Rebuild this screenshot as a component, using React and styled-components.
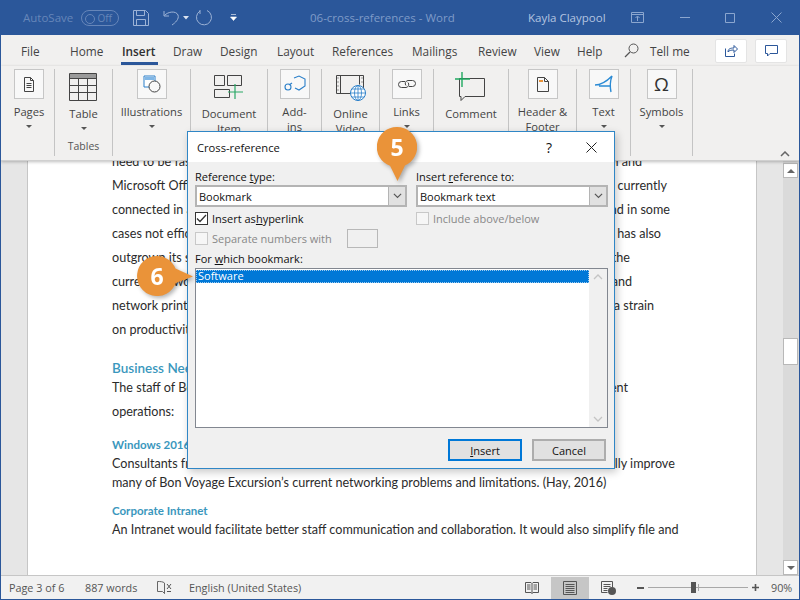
import React from 'react';
import styled, { createGlobalStyle } from 'styled-components';

const Global = createGlobalStyle`
  html, body { margin: 0; padding: 0; background: #fff; }
  * { box-sizing: border-box; }
`;

const uiFont = `"Open Sans", "Noto Sans", sans-serif`;
const docFont = `Lato, "Open Sans", sans-serif`;

const Frame = styled.div`
  position: relative;
  width: 800px;
  height: 600px;
  overflow: hidden;
  display: flex;
  flex-direction: column;
  border: 1px solid #2b579a;
  border-top: 0;
  font-family: ${uiFont};
  background: #f1f0ef;
`;

/* title bar */
const TitleBar = styled.div`
  position: relative;
  flex: 0 0 35px;
  display: flex;
  align-items: center;
  background: #2b579a;
  color: #7f9bc8;
  font-size: 11.5px;
  padding-left: 23px;
  margin: 0 -1px;
`;
const AutoSave = styled.span`
  width: 58px;
  color: #6686b9;
`;
const Toggle = styled.span`
  width: 38px;
  height: 16px;
  border: 1px solid #6686b9;
  border-radius: 8px;
  display: flex;
  align-items: center;
  justify-content: flex-end;
  padding-right: 6px;
  font-size: 10px;
  color: #6686b9;
  position: relative;
  &::before {
    content: '';
    position: absolute;
    left: 3px;
    top: 3px;
    width: 8px;
    height: 8px;
    border-radius: 50%;
    border: 1px solid #6686b9;
  }
`;
const QuickIcons = styled.div`
  display: flex;
  align-items: center;
  margin-left: 14px;
`;
const QuickIcon = styled.svg`
  display: block;
  margin-right: ${p => p.$gap || 0}px;
`;
const DocTitle = styled.span`
  position: absolute;
  left: 310px;
  color: #7f9bc8;
`;
const UserName = styled.span`
  position: absolute;
  left: 528px;
  color: #b4c5e0;
`;
const WindowButtons = styled.div`
  margin-left: auto;
  display: flex;
  align-items: center;
  padding-right: 18px;
`;
const WinIcon = styled.svg`
  display: block;
  margin-left: ${p => p.$gap || 0}px;
`;

/* tabs */
const TabRow = styled.div`
  flex: 0 0 31px;
  display: flex;
  align-items: center;
  padding-left: 20px;
  font-size: 11.8px;
  color: #444;
`;
const Tab = styled.span`
  position: relative;
  width: ${p => p.$w}px;
  font-weight: ${p => (p.$active ? 600 : 400)};
  color: ${p => (p.$active ? '#2f2f2f' : '#444')};
  padding-top: 0;
  &::after {
    content: '';
    display: ${p => (p.$active ? 'block' : 'none')};
    position: absolute;
    left: -1px;
    bottom: -6px;
    width: 37px;
    height: 3px;
    background: #2b579a;
  }
`;
const TellMe = styled.span`
  margin-left: 11px;
  width: 65px;
`;
const HeadButton = styled.span`
  width: 32px;
  height: 24px;
  margin-right: 8px;
  display: flex;
  align-items: center;
  justify-content: center;
  background: #fff;
  border: 1px solid #e4e4e4;
  border-radius: 2px;
`;

/* ribbon */
const Ribbon = styled.div`
  position: relative;
  flex: 0 0 95px;
  display: flex;
  padding: 3px 0 4px 3px;
  box-shadow: 0 1px 3px rgba(0, 0, 0, 0.25);
  border-bottom: 1px solid #d0d0d0;
  z-index: 1;
`;
const Group = styled.div`
  width: ${p => p.$w}px;
  border-right: 1px solid #c4c4c4;
  display: flex;
  flex-direction: column;
  align-items: center;
  font-size: 11.2px;
  line-height: 15px;
  color: #444;
  text-align: center;
  overflow: hidden;
`;
const BoxIcon = styled.div`
  width: 30px;
  height: 30px;
  flex: none;
  display: flex;
  align-items: center;
  justify-content: center;
  background: #f8f8f8;
  border: 1px solid #c6c6c6;
  margin-bottom: 5px;
`;
const LargeIcon = styled.div`
  height: 30px;
  flex: none;
  display: flex;
  align-items: center;
  justify-content: center;
  margin: 3px 0 4px;
`;
const Caret = styled.span`
  display: ${p => (p.$inline ? 'inline-block' : 'block')};
  width: 0;
  height: 0;
  margin: ${p => (p.$inline ? '0 0 2px 3px' : '6px auto 0')};
  vertical-align: middle;
  border-left: 3px solid transparent;
  border-right: 3px solid transparent;
  border-top: 3px solid #555;
`;
const GroupName = styled.span`
  margin-top: auto;
  padding-bottom: 2px;
  font-size: 10.5px;
  color: #555;
`;
const Collapse = styled.svg`
  position: absolute;
  right: 9px;
  bottom: 3px;
`;

/* document */
const DocArea = styled.div`
  flex: 1;
  min-height: 0;
  display: flex;
  background: #e6e6e6;
`;
const PageWrap = styled.div`
  flex: 1;
  padding: 0 26px 0 26px;
`;
const Page = styled.div`
  height: 100%;
  background: #fff;
  border-left: 1px solid #c6c6c6;
  border-right: 1px solid #c6c6c6;
  padding-left: 84px;
  font-family: ${docFont};
  font-size: 12.6px;
  color: #2b2b2b;
  overflow: hidden;
`;
const Line = styled.div`
  display: flex;
  justify-content: space-between;
  width: ${p => p.$w}px;
  height: ${p => p.$h || 24}px;
  line-height: ${p => p.$h || 24}px;
  margin-top: ${p => p.$top || 0}px;
  white-space: nowrap;
`;
const Heading = styled.div`
  font-size: ${p => (p.$big ? 13.5 : 11.5)}px;
  font-weight: ${p => (p.$big ? 600 : 700)};
  line-height: 16px;
  margin-top: ${p => p.$top}px;
  color: #3a97bd;
  white-space: nowrap;
`;
const ScrollBar = styled.div`
  width: 16px;
  background: #dadada;
  display: flex;
  flex-direction: column;
  padding-top: 2px;
`;
const ScrollButton = styled.div`
  width: 15px;
  height: 15px;
  background: #fff;
  border: 1px solid #b8b8b8;
  display: flex;
  align-items: center;
  justify-content: center;
  margin-top: ${p => p.$auto ? 'auto' : '0'};
`;
const ScrollThumb = styled.div`
  width: 15px;
  height: 27px;
  margin-top: 160px;
  background: #fff;
  border: 1px solid #b8b8b8;
`;

/* status bar */
const StatusBar = styled.div`
  flex: 0 0 24px;
  display: flex;
  align-items: center;
  background: #f1f1f1;
  border-top: 1px solid #c6c6c6;
  font-size: 10.8px;
  color: #555;
  padding-left: 8px;
`;
const StatusText = styled.span`
  width: ${p => p.$w}px;
  white-space: nowrap;
`;
const ViewButton = styled.span`
  height: 22px;
  width: ${p => p.$w}px;
  display: flex;
  align-items: center;
  justify-content: center;
  background: ${p => (p.$on ? '#c6c6c6' : 'transparent')};
`;
const Zoom = styled.div`
  margin-left: 10px;
  display: flex;
  align-items: center;
`;
const ZoomTrack = styled.div`
  position: relative;
  width: 100px;
  height: 1px;
  margin: 0 4px;
  background: #a8a8a8;
`;
const ZoomThumb = styled.span`
  position: absolute;
  left: 43px;
  top: -5px;
  width: 5px;
  height: 11px;
  background: #555;
`;
const ZoomTick = styled.span`
  position: absolute;
  left: 50px;
  top: -3px;
  width: 1px;
  height: 7px;
  background: #a8a8a8;
`;
const ZoomPct = styled.span`
  margin-left: 12px;
`;

/* dialog */
const Dialog = styled.div`
  position: absolute;
  left: 186px;
  top: 131px;
  width: 428px;
  height: 338px;
  z-index: 5;
  display: flex;
  flex-direction: column;
  background: #f0f0f0;
  border: 1px solid #2f86c6;
  box-shadow: 2px 3px 8px rgba(0, 0, 0, 0.22);
  font-size: 11px;
  color: #111;
`;
const DialogHead = styled.div`
  flex: 0 0 30px;
  display: flex;
  align-items: center;
  padding: 0 17px 0 9px;
  background: #fff;
  font-size: 11.2px;
`;
const DialogTitle = styled.span`
  flex: 1;
`;
const HelpMark = styled.span`
  font-size: 14px;
  margin-right: 34px;
`;
const DialogBody = styled.div`
  flex: 1;
  display: flex;
  flex-direction: column;
  padding: 7px 7px 0 7px;
`;
const Columns = styled.div`
  display: grid;
  grid-template-columns: 212px 192px;
  column-gap: 9px;
`;
const FieldLabel = styled.div`
  height: 16px;
  line-height: 15px;
  white-space: nowrap;
  color: ${p => (p.$off ? '#888' : '#111')};
`;
const Combo = styled.div`
  height: 22px;
  display: flex;
  align-items: center;
  background: #fff;
  border: 2px solid #b4b4b4;
  padding-left: 2px;
`;
const ComboValue = styled.span`
  flex: 1;
`;
const ComboArrow = styled.span`
  width: 17px;
  align-self: stretch;
  display: flex;
  align-items: center;
  justify-content: center;
  background: #e1e1e1;
  border-left: 1px solid #b4b4b4;
`;
const CheckRow = styled.div`
  display: flex;
  align-items: center;
  height: 14px;
  margin-top: ${p => p.$top || 0}px;
  color: ${p => (p.$off ? '#888' : '#111')};
  white-space: nowrap;
`;
const CheckBox = styled.span`
  flex: none;
  width: 13px;
  height: 13px;
  margin-right: 4px;
  display: flex;
  align-items: center;
  justify-content: center;
  background: ${p => (p.$off ? '#f6f6f6' : '#fff')};
  border: 1px solid ${p => (p.$off ? '#c8c8c8' : '#333')};
`;
const SmallInput = styled.span`
  width: 31px;
  height: 19px;
  margin-left: 15px;
  background: #f0f0f0;
  border: 1px solid #b8b8b8;
`;
const SeparateRow = styled.div`
  display: flex;
  align-items: center;
  height: 19px;
  margin-top: 4px;
`;
const ListBox = styled.div`
  margin-top: 1px;
  width: 413px;
  height: 160px;
  display: flex;
  background: #fff;
  border: 1px solid #828790;
`;
const ListItems = styled.div`
  flex: 1;
  padding: 1px 0 0 0;
`;
const ListItem = styled.div`
  height: 13px;
  line-height: 12px;
  padding-left: 2px;
  color: #fff;
  background: #0078d7;
  outline: 1px dotted #9ccbf0;
  outline-offset: -1px;
`;
const ListScroll = styled.div`
  width: 18px;
  background: #f0f0f0;
  display: flex;
  flex-direction: column;
  justify-content: space-between;
  align-items: center;
  padding: 5px 0 5px;
`;
const DialogButtons = styled.div`
  display: flex;
  justify-content: flex-end;
  gap: 10px;
  margin-top: 11px;
  padding-right: 1px;
`;
const DialogButton = styled.div`
  width: 74px;
  height: 22px;
  display: flex;
  align-items: center;
  justify-content: center;
  background: #e1e1e1;
  border: 2px solid ${p => (p.$primary ? '#0078d7' : '#adadad')};
`;

/* numbered callouts */
const Callout = styled.div`
  position: absolute;
  left: ${p => p.$x}px;
  top: ${p => p.$y}px;
  z-index: 6;
  width: ${p => p.$w}px;
  height: ${p => p.$h}px;
  filter: drop-shadow(2px 2px 2px rgba(0, 0, 0, 0.3));
`;
const CalloutNum = styled.span`
  position: absolute;
  left: 0;
  top: 0;
  width: 40px;
  height: 40px;
  display: flex;
  align-items: center;
  justify-content: center;
  color: #fff;
  font: 700 23px ${uiFont};
`;

const Chevron = ({ up, color = '#555', size = 9 }) => (
  <svg width={size} height={size * 0.6} viewBox="0 0 10 6">
    <path d={up ? 'M1 5l4-4 4 4' : 'M1 1l4 4 4-4'} fill="none" stroke={color} strokeWidth="1.3" />
  </svg>
);

const tabs = [
  ['File', 49], ['Home', 52], ['Insert', 51, true], ['Draw', 47], ['Design', 57], ['Layout', 55],
  ['References', 80], ['Mailings', 66], ['Review', 56], ['View', 43], ['Help', 47],
];

const stroke = { fill: 'none', stroke: '#444', strokeWidth: 1 };

function Ribbons() {
  return (
    <Ribbon>
      <Group $w={51}>
        <BoxIcon>
          <svg width="14" height="17" viewBox="0 0 14 17"><path d="M2.5 1.5h6l3 3v11h-9z M8.500 1.500v3h3 M4.500 7.500h5 M4.500 9.500h5 M4.500 11.500h5" {...stroke} /></svg>
        </BoxIcon>
        Pages<Caret />
      </Group>
      <Group $w={58}>
        <LargeIcon>
          <svg width="29" height="29" viewBox="0 0 29 29">
            <rect x="1" y="1" width="27" height="4" fill="#9a9a9a" />
            <path d="M.5.500h27v27H.5z M.5 5.500h27 M.5 12.500h27 M.5 19.500h27 M9.500 5.500v22 M18.500 5.500v22" {...stroke} />
          </svg>
        </LargeIcon>
        Table<Caret />
        <GroupName>Tables</GroupName>
      </Group>
      <Group $w={78}>
        <BoxIcon>
          <svg width="18" height="18" viewBox="0 0 18 18">
            <path d="M1 1h11v11H1z" fill="#fff" stroke="#2a7fc9" />
            <path d="M2 2h9v3H2z" fill="#7fb6e6" />
            <circle cx="11.500" cy="11.500" r="5.500" fill="#f8f8f8" stroke="#444" />
          </svg>
        </BoxIcon>
        Illustrations<Caret />
      </Group>
      <Group $w={77}>
        <LargeIcon>
          <svg width="32" height="26" viewBox="0 0 32 26">
            <path d="M1.500 1.500h10v10h-10z M14.500 1.500h14v10h-14z M1.500 15.500h15v8h-15z" {...stroke} />
            <path d="M22 10v15 M15 18h15" stroke="#2aa866" strokeWidth="1.200" fill="none" />
          </svg>
        </LargeIcon>
        Document<br />Item
      </Group>
      <Group $w={54}>
        <BoxIcon>
          <svg width="24" height="18" viewBox="0 0 24 18">
            <path d="M11 3l5-2 6 3v7l-6 4-4-2" fill="none" stroke="#2a7fc9" strokeWidth="1.100" />
            <path d="M9 8l-3 2" fill="none" stroke="#2a7fc9" strokeWidth="1.100" />
            <circle cx="5" cy="12" r="3" fill="none" stroke="#2a7fc9" strokeWidth="1.100" />
          </svg>
        </BoxIcon>
        Add-<br />ins<Caret $inline />
      </Group>
      <Group $w={58}>
        <LargeIcon>
          <svg width="32" height="29" viewBox="0 0 32 29">
            <path d="M1.500 2.500h27v18h-27z M5.500 2.500v18 M24.500 2.500v9" {...stroke} />
            <path d="M3 4.500v1 M3 8.500v1 M3 12.500v1 M3 16.500v1 M27 4.500v1 M27 8.500v1" stroke="#444" fill="none" />
            <circle cx="23" cy="20" r="7.500" fill="#fff" stroke="#2a7fc9" />
            <path d="M15.500 20h15 M23 12.500v15 M17 16h12 M17 24h12" stroke="#2a7fc9" fill="none" strokeWidth=".8" />
            <ellipse cx="23" cy="20" rx="3.500" ry="7.500" fill="none" stroke="#2a7fc9" strokeWidth=".8" />
          </svg>
        </LargeIcon>
        Online<br />Video
      </Group>
      <Group $w={54}>
        <BoxIcon>
          <svg width="20" height="14" viewBox="0 0 20 14">
            <path d="M8 4.500H4.500a3 3 0 000 6H9a3 3 0 002-5 M12 9.500h3.500a3 3 0 000-6H11a3 3 0 00-2 5" {...stroke} />
          </svg>
        </BoxIcon>
        Links<Caret />
      </Group>
      <Group $w={75}>
        <LargeIcon>
          <svg width="32" height="30" viewBox="0 0 32 30">
            <path d="M4.500 6.500h25v18H10l-4 4v-4H4.500z" {...stroke} />
            <path d="M7 0v15 M0 7h15" stroke="#1fa860" strokeWidth="1.400" fill="none" />
          </svg>
        </LargeIcon>
        Comment
      </Group>
      <Group $w={68}>
        <BoxIcon>
          <svg width="14" height="17" viewBox="0 0 14 17">
            <path d="M1.500 1.500h7l4 4v10h-11z M8.500 1.500v4h4" {...stroke} />
            <path d="M3 4h4v2H3z" fill="#ea9339" />
          </svg>
        </BoxIcon>
        Header &amp;<br />Footer<Caret $inline />
      </Group>
      <Group $w={54}>
        <BoxIcon>
          <svg width="20" height="18" viewBox="0 0 20 18">
            <path d="M1 10c5 0 10-2 17-9-2 5-2 11-1 16 M5 11l11 0" fill="none" stroke="#2a8ad4" strokeWidth="1.400" />
          </svg>
        </BoxIcon>
        Text<Caret />
      </Group>
      <Group $w={62}>
        <BoxIcon>
          <span style={{ fontSize: 19, color: '#333', lineHeight: 1 }}>Ω</span>
        </BoxIcon>
        Symbols<Caret />
      </Group>
      <Collapse width="10" height="6" viewBox="0 0 10 6"><path d="M1 5l4-4 4 4" fill="none" stroke="#666" strokeWidth="1.500" /></Collapse>
    </Ribbon>
  );
}

function CrossReference() {
  return (
    <Dialog>
      <DialogHead>
        <DialogTitle>Cross-reference</DialogTitle>
        <HelpMark>?</HelpMark>
        <svg width="11" height="11" viewBox="0 0 11 11"><path d="M.5.500l10 10 M10.500.500l-10 10" stroke="#222" fill="none" /></svg>
      </DialogHead>
      <DialogBody>
        <Columns>
          <div>
            <FieldLabel>Reference <u>t</u>ype:</FieldLabel>
            <Combo>
              <ComboValue>Bookmark</ComboValue>
              <ComboArrow><Chevron /></ComboArrow>
            </Combo>
            <CheckRow $top={4}>
              <CheckBox>
                <svg width="11" height="9" viewBox="0 0 11 9"><path d="M1 4.500l3 3 6-6.500" fill="none" stroke="#333" strokeWidth="1.300" /></svg>
              </CheckBox>
              Insert as <u>h</u>yperlink
            </CheckRow>
          </div>
          <div>
            <FieldLabel>Insert <u>r</u>eference to:</FieldLabel>
            <Combo>
              <ComboValue>Bookmark text</ComboValue>
              <ComboArrow><Chevron /></ComboArrow>
            </Combo>
            <CheckRow $top={4} $off>
              <CheckBox $off />
              Include above/below
            </CheckRow>
          </div>
        </Columns>
        <SeparateRow>
          <CheckRow $off>
            <CheckBox $off />
            Separate numbers with
          </CheckRow>
          <SmallInput />
        </SeparateRow>
        <FieldLabel style={{ marginTop: 3 }}>For <u>w</u>hich bookmark:</FieldLabel>
        <ListBox>
          <ListItems><ListItem>Software</ListItem></ListItems>
          <ListScroll>
            <Chevron up color="#c4c4c4" size={10} />
            <Chevron color="#c4c4c4" size={10} />
          </ListScroll>
        </ListBox>
        <DialogButtons>
          <DialogButton $primary><span><u>I</u>nsert</span></DialogButton>
          <DialogButton>Cancel</DialogButton>
        </DialogButtons>
      </DialogBody>
    </Dialog>
  );
}

export default function App() {
  return (
    <Frame>
      <Global />
      <TitleBar>
        <AutoSave>AutoSave</AutoSave>
        <Toggle>Off</Toggle>
        <QuickIcons>
          <QuickIcon $gap={14} width="16" height="16" viewBox="0 0 16 16">
            <path d="M.5.500h12l3 3v12H.500z M3.500.500v5h8v-5 M3.500 15.500v-6h9v6" fill="none" stroke="#9db3d6" />
          </QuickIcon>
          <QuickIcon $gap={3} width="17" height="16" viewBox="0 0 17 16">
            <path d="M1 1v5h5 M1.500 5.500C5 1.500 13 .5 15 5c1.500 4-3 8-6 10" fill="none" stroke="#9db3d6" />
          </QuickIcon>
          <QuickIcon $gap={7} width="6" height="4" viewBox="0 0 6 4"><path d="M0 0h6L3 3.500z" fill="#dbe3f0" /></QuickIcon>
          <QuickIcon $gap={17} width="17" height="17" viewBox="0 0 17 17">
            <path d="M11 1.500a7.500 7.500 0 11-7 .5 M4 1v4" fill="none" stroke="#9db3d6" />
          </QuickIcon>
          <QuickIcon width="7" height="7" viewBox="0 0 7 7"><path d="M1 .5h5M.5 3h6L3.500 6.500z" fill="#fff" stroke="#fff" strokeWidth=".6" /></QuickIcon>
        </QuickIcons>
        <DocTitle>06-cross-references - Word</DocTitle>
        <UserName>Kayla Claypool</UserName>
        <WindowButtons>
          <WinIcon width="13" height="11" viewBox="0 0 13 11">
            <path d="M.5.500h12v10H.5z M.5 2.500h12 M6.500 9V4.500M4.500 6l2-2 2 2" fill="none" stroke="#8ba6cf" />
          </WinIcon>
          <WinIcon $gap={36} width="10" height="1" viewBox="0 0 10 1"><path d="M0 .5h10" stroke="#8ba6cf" /></WinIcon>
          <WinIcon $gap={35} width="10" height="10" viewBox="0 0 10 10"><path d="M.5.500h9v9h-9z" fill="none" stroke="#8ba6cf" /></WinIcon>
          <WinIcon $gap={36} width="11" height="11" viewBox="0 0 11 11"><path d="M.5.500l10 10M10.500.500l-10 10" fill="none" stroke="#8ba6cf" /></WinIcon>
        </WindowButtons>
      </TitleBar>

      <TabRow>
        {tabs.map(([name, w, active]) => <Tab key={name} $w={w} $active={active}>{name}</Tab>)}
        <svg width="15" height="15" viewBox="0 0 15 15"><circle cx="9.500" cy="5.500" r="4.500" fill="none" stroke="#555" /><path d="M6 9l-5 5" stroke="#555" strokeWidth="1.200" /></svg>
        <TellMe>Tell me</TellMe>
        <HeadButton>
          <svg width="13" height="13" viewBox="0 0 13 13"><path d="M.5 4.500v8h9v-3 M3 8c0-3 2-4 6-4V1.500l3.500 3.500L9 8.500V6C6 6 4 6.500 3 8z" fill="none" stroke="#2b579a" /></svg>
        </HeadButton>
        <HeadButton>
          <svg width="13" height="12" viewBox="0 0 13 12"><path d="M.5.500h12v8H5l-2.500 2.500V8.500h-2z" fill="none" stroke="#2b579a" /></svg>
        </HeadButton>
      </TabRow>

      <Ribbons />

      <DocArea>
        <PageWrap>
          <Page>
            <Line $w={530} style={{ marginTop: -11 }}><span>need to be faster and more reliable to run</span><span>on and</span></Line>
            <Line $w={555}><span>Microsoft Office and other applications are</span><span>currently</span></Line>
            <Line $w={558}><span>connected in a peer-to-peer arrangement</span><span>and in some</span></Line>
            <Line $w={549}><span>cases not efficient. The company</span><span>has also</span></Line>
            <Line $w={518}><span>outgrown its small office network</span><span>the</span></Line>
            <Line $w={520}><span>current network has no file server</span><span>and</span></Line>
            <Line $w={542}><span>network printing capabilities which</span><span>a strain</span></Line>
            <Line $w={300}><span>on productivity.</span></Line>
            <Heading $big $top={18}>Business Needs</Heading>
            <Line $w={516} $h={24} $top={0}><span>The staff of Bon Voyage need an</span><span>ent</span></Line>
            <Line $w={300}><span>operations:</span></Line>
            <Heading $top={13}>Windows 2016 Server</Heading>
            <Line $w={560} $h={19} $top={1}><span>Consultants from several firms advise that a dedicated Windows 2016 server will dramatically improve</span></Line>
            <Line $w={560} $h={19}><span>many of Bon Voyage Excursion’s current networking problems and limitations. (Hay, 2016)</span></Line>
            <Heading $top={11}>Corporate Intranet</Heading>
            <Line $w={560} $h={19} $top={1}><span>An Intranet would facilitate better staff communication and collaboration. It would also simplify file and</span></Line>
          </Page>
        </PageWrap>
        <ScrollBar>
          <ScrollButton><svg width="8" height="4" viewBox="0 0 8 4"><path d="M0 4l4-4 4 4z" fill="#666" /></svg></ScrollButton>
          <ScrollThumb />
          <ScrollButton $auto><svg width="8" height="4" viewBox="0 0 8 4"><path d="M0 0l4 4 4-4z" fill="#666" /></svg></ScrollButton>
        </ScrollBar>
      </DocArea>

      <StatusBar>
        <StatusText $w={76}>Page 3 of 6</StatusText>
        <StatusText $w={72}>887 words</StatusText>
        <svg width="15" height="14" viewBox="0 0 15 14" style={{ marginRight: 17 }}>
          <path d="M7.500 2C6 .5 3 .5.500.500v10h5l2 2V2z M7.500 12.500v-2" fill="none" stroke="#666" />
          <path d="M10 3l4 5m0-5l-4 5M10 10.500h4" fill="none" stroke="#555" />
        </svg>
        <StatusText $w={324}>English (United States)</StatusText>
        <ViewButton $w={38}>
          <svg width="14" height="14" viewBox="0 0 14 14"><path d="M.5 1.500h5.500L7 2.500l1-1h5.500v10H8l-1 1-1-1H.5z M7 2.500v10 M2 4h3.500 M2 6h3.500 M2 8h3.500 M8.500 4H12 M8.500 6H12 M8.500 8H12" fill="none" stroke="#555" /></svg>
        </ViewButton>
        <ViewButton $w={38} $on>
          <svg width="14" height="14" viewBox="0 0 14 14"><path d="M.5.500h13v13H.5z M2.500 3.500h9 M2.500 5.500h9 M2.500 7.500h9 M2.500 9.500h9 M2.500 11.500h9" fill="none" stroke="#555" /></svg>
        </ViewButton>
        <ViewButton $w={38}>
          <svg width="15" height="14" viewBox="0 0 15 14">
            <path d="M.5.500h11v6 M.5.500v11h6 M2.500 3.500h7 M2.500 5.500h7 M2.500 7.500h4 M2.500 9.500h4" fill="none" stroke="#555" />
            <circle cx="11" cy="10" r="4" fill="#555" />
          </svg>
        </ViewButton>
        <Zoom>
          <svg width="7" height="2" viewBox="0 0 7 2"><path d="M0 1h7" stroke="#555" strokeWidth="2" /></svg>
          <ZoomTrack><ZoomThumb /><ZoomTick /></ZoomTrack>
          <svg width="7" height="7" viewBox="0 0 7 7"><path d="M0 3.500h7M3.500 0v7" stroke="#555" strokeWidth="1.600" /></svg>
          <ZoomPct>90%</ZoomPct>
        </Zoom>
      </StatusBar>

      <CrossReference />

      <Callout $x={376} $y={127} $w={40} $h={56}>
        <svg width="40" height="56" viewBox="0 0 40 56">
          <path d="M20 0a20 20 0 018 38.400L20.500 54 13 38.800A20 20 0 0120 0z" fill="#ea9339" />
        </svg>
        <CalloutNum>5</CalloutNum>
      </Callout>
      <Callout $x={136} $y={256} $w={57} $h={42}>
        <svg width="57" height="42" viewBox="0 0 57 42">
          <path d="M20 0a20 20 0 0118.500 12.500L56 20.500 38.800 27A20 20 0 1120 0z" fill="#ea9339" />
        </svg>
        <CalloutNum>6</CalloutNum>
      </Callout>
    </Frame>
  );
}
